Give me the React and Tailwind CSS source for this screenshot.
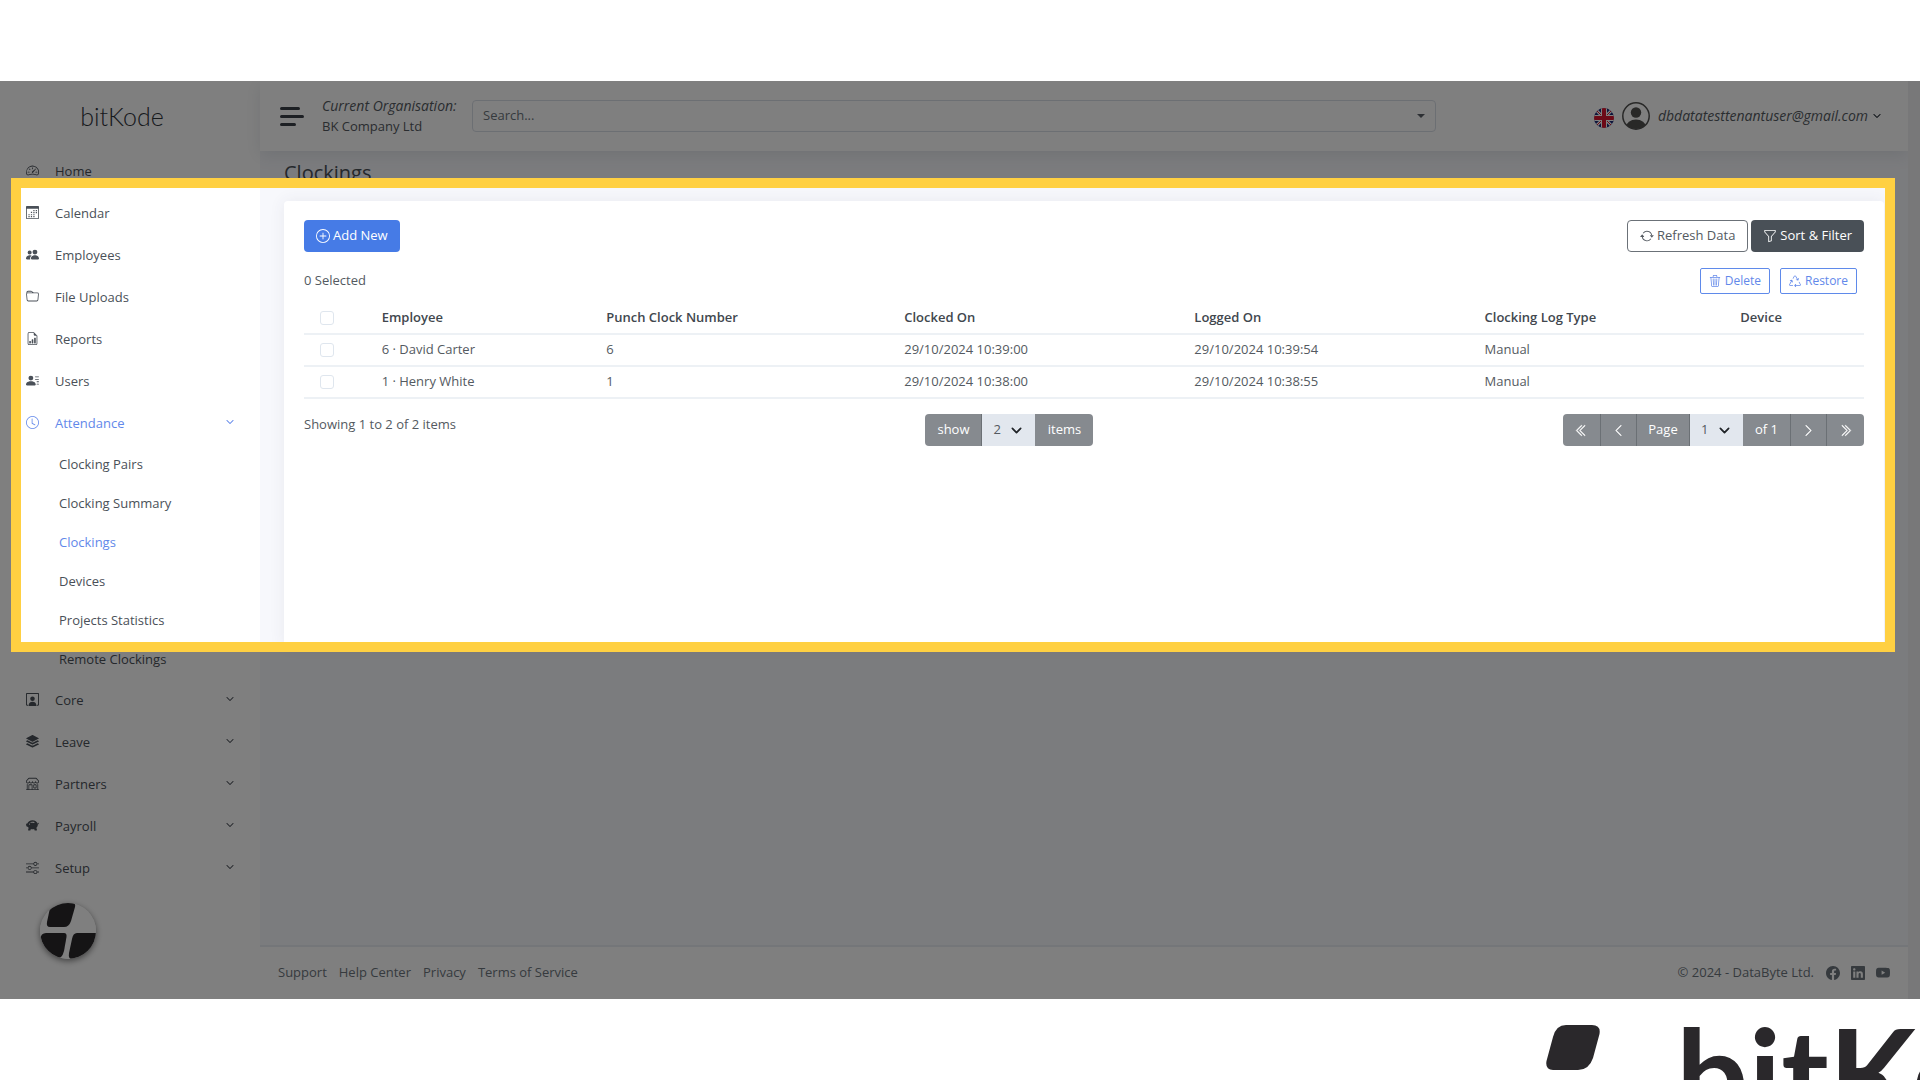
import { useState } from "react";
import {
  BsArrowRepeat,
  BsChevronDoubleLeft,
  BsChevronDoubleRight,
  BsChevronDown,
  BsChevronLeft,
  BsChevronRight,
  BsClock,
  BsFacebook,
  BsFileEarmarkBarGraph,
  BsFolder,
  BsFunnel,
  BsLinkedin,
  BsPeopleFill,
  BsPersonLinesFill,
  BsPiggyBankFill,
  BsPlusCircle,
  BsRecycle,
  BsShop,
  BsSliders,
  BsSpeedometer2,
  BsStack,
  BsTrash3,
  BsYoutube,
} from "react-icons/bs";

function CalendarIcon({ className }) {
  return (
    <svg viewBox="0 0 16 16" className={className} fill="currentColor">
      <path d="M1 0h14a1 1 0 0 1 1 1v14a1 1 0 0 1-1 1H1a1 1 0 0 1-1-1V1a1 1 0 0 1 1-1zm0 3.500V15h14V3.500z" fillRule="evenodd" />
      <path d="M9 5h1.500v1.500H9zM12 5h1.500v1.500H12zM6 7h1.500v1.500H6zM9 7.500h1.500V9H9zM12 7.500h1.500V9H12zM3 10h1.500v1.500H3zM6 10h1.500v1.500H6zM9 10h1.500v1.500H9zM3 12.300h1.500v1.500H3zM6 12.300h1.500v1.500H6zM9 12.300h1.500v1.500H9z" />
    </svg>
  );
}

function PersonFrameIcon({ className }) {
  return (
    <svg viewBox="0 0 16 16" className={className} fill="currentColor">
      <path d="M3 15H1.500a1 1 0 0 1-1-1V1.500a1 1 0 0 1 1-1h13a1 1 0 0 1 1 1V14a1 1 0 0 1-1 1H13" fill="none" stroke="currentColor" strokeWidth="1.300" />
      <circle cx="8" cy="7" r="2.800" />
      <path d="M3.500 16v-1.500C3.500 12 5.500 10.700 8 10.700s4.500 1.300 4.500 3.800V16z" />
    </svg>
  );
}

const menu = [
  { label: "Home", icon: BsSpeedometer2 },
  { label: "Calendar", icon: CalendarIcon },
  { label: "Employees", icon: BsPeopleFill },
  { label: "File Uploads", icon: BsFolder },
  { label: "Reports", icon: BsFileEarmarkBarGraph },
  { label: "Users", icon: BsPersonLinesFill },
  {
    label: "Attendance",
    icon: BsClock,
    active: true,
    children: [
      "Clocking Pairs",
      "Clocking Summary",
      "Clockings",
      "Devices",
      "Projects Statistics",
      "Remote Clockings",
    ],
  },
  { label: "Core", icon: PersonFrameIcon, children: [] },
  { label: "Leave", icon: BsStack, children: [] },
  { label: "Partners", icon: BsShop, children: [] },
  { label: "Payroll", icon: BsPiggyBankFill, children: [] },
  { label: "Setup", icon: BsSliders, children: [] },
];

const clockings = [
  { id: 1, employee: "6 · David Carter", punch: "6", clocked: "29/10/2024 10:39:00", logged: "29/10/2024 10:39:54", type: "Manual" },
  { id: 2, employee: "1 · Henry White", punch: "1", clocked: "29/10/2024 10:38:00", logged: "29/10/2024 10:38:55", type: "Manual" },
];

const checkbox = "block size-[14px] appearance-none rounded-[3px] border border-[#dfe6ee] bg-white checked:bg-[#467be6]";
const pagerCell = "flex h-8 items-center justify-center border-r border-[#6b7075] bg-[#868a8f] text-white last:border-r-0";

function Sidebar() {
  return (
    <aside className="flex w-[260px] shrink-0 flex-col bg-white">
      <div className="flex h-[70px] items-center justify-center pr-4">
        <a href="#" className="font-['Lato'] text-[25px] leading-none font-light text-[#2f343b]">bitKode</a>
      </div>
      <nav>
        <ul>
          {menu.map(({ label, icon: Icon, active, children }) => (
            <li key={label}>
              <a
                href="#"
                className={`flex h-[42px] items-center pr-[26px] pl-[26px] ${active ? "text-[#6288ea]" : "text-[#4a5058]"}`}
              >
                <Icon className="mb-1 size-[13px]" />
                <span className="ml-4 flex-1">{label}</span>
                {children && <BsChevronDown className="mb-1 size-2 stroke-1" />}
              </a>
              {children?.length > 0 && (
                <ul className="pb-px">
                  {children.map((child) => (
                    <li key={child}>
                      <a
                        href="#"
                        className={`flex h-[39px] items-center pl-[59px] ${child === "Clockings" ? "text-[#6288ea]" : "text-[#4a5058]"}`}
                      >
                        {child}
                      </a>
                    </li>
                  ))}
                </ul>
              )}
            </li>
          ))}
        </ul>
      </nav>
      <button type="button" aria-label="Open assistant" className="mt-[13px] ml-10 size-14 rounded-full shadow-[0_2px_6px_rgba(0,0,0,0.5)]">
        <svg viewBox="0 0 56 56" className="size-14">
          <defs>
            <clipPath id="disc">
              <circle cx="28" cy="28" r="28" />
            </clipPath>
          </defs>
          <circle cx="28" cy="28" r="28" fill="#fff" />
          <g clipPath="url(#disc)" fill="#2a282b">
            <path d="M13 0H32Q36 0 35 4L31 18Q29 24 24 24H10Q6 24 7 19L10 5Z" />
            <path d="M6 30H24Q27 30 26.500 34L24 48Q22 56 16 56H0V36Q1 30 6 30Z" />
            <path d="M37 30H56V56H32Q28 56 29 50L32 36Q33 30 37 30Z" />
          </g>
        </svg>
      </button>
    </aside>
  );
}

function Header() {
  return (
    <header className="flex h-[70px] items-center bg-white pr-[27px] pl-5 shadow-[0_4px_16px_rgba(60,70,90,0.12)]">
      <button type="button" aria-label="Toggle menu" className="flex flex-col gap-[5px]">
        <span className="h-[3px] w-5 rounded bg-[#3b4048]" />
        <span className="h-[3px] w-6 rounded bg-[#3b4048]" />
        <span className="h-[3px] w-4 rounded bg-[#3b4048]" />
      </button>
      <div className="ml-[18px] w-[150px] shrink-0 leading-[21px]">
        <p className="text-sm leading-[21px] italic">Current Organisation:</p>
        <p>BK Company Ltd</p>
      </div>
      <div className="flex h-8 w-full max-w-[964px] items-center rounded border border-[#d9dee6] px-[10px]">
        <input
          type="text"
          aria-label="Search"
          placeholder="Search..."
          className="w-full bg-transparent outline-none placeholder:text-[#6c757d]"
        />
        <span className="border-x-4 border-t-4 border-x-transparent border-t-[#5a6068]" />
      </div>
      <div className="ml-auto flex shrink-0 items-center">
        <svg viewBox="0 0 20 20" className="mt-1 size-5">
          <defs>
            <clipPath id="flag">
              <circle cx="10" cy="10" r="10" />
            </clipPath>
          </defs>
          <g clipPath="url(#flag)">
            <rect width="20" height="20" fill="#1b2a78" />
            <path d="M0 0L20 20M20 0L0 20" stroke="#fff" strokeWidth="3" />
            <path d="M0 0L20 20M20 0L0 20" stroke="#d8142e" strokeWidth="1" />
            <path d="M10 0V20M0 10H20" stroke="#fff" strokeWidth="6" />
            <path d="M10 0V20M0 10H20" stroke="#d8142e" strokeWidth="4" />
          </g>
        </svg>
        <svg viewBox="0 0 28 28" className="ml-2 size-7">
          <defs>
            <clipPath id="avatar">
              <circle cx="14" cy="14" r="13" />
            </clipPath>
          </defs>
          <circle cx="14" cy="14" r="13.200" fill="none" stroke="#50504f" strokeWidth="1.500" />
          <circle cx="14" cy="10.500" r="5.200" fill="#50504f" />
          <ellipse cx="14" cy="25" rx="10" ry="7.500" fill="#50504f" clipPath="url(#avatar)" />
        </svg>
        <button type="button" className="ml-2 flex items-center gap-[5px] text-sm italic">
          dbdatatesttenantuser@gmail.com
          <BsChevronDown className="size-2 stroke-2" />
        </button>
      </div>
    </header>
  );
}

function ClockingsTable() {
  return (
    <table className="w-full table-fixed text-left">
      <colgroup>
        <col className="w-[4.4%]" />
        <col className="w-[14.4%]" />
        <col className="w-[19.1%]" />
        <col className="w-[18.6%]" />
        <col className="w-[18.6%]" />
        <col className="w-[16.4%]" />
        <col />
      </colgroup>
      <thead>
        <tr className="h-8 border-b-2 border-[#edf1f5] text-[#41474e]">
          <th className="pl-4">
            <input type="checkbox" aria-label="Select all" className={checkbox} />
          </th>
          <th className="pl-[9px] font-semibold">Employee</th>
          <th className="pl-[9px] font-semibold">Punch Clock Number</th>
          <th className="pl-[9px] font-semibold">Clocked On</th>
          <th className="pl-[9px] font-semibold">Logged On</th>
          <th className="pl-[9px] font-semibold">Clocking Log Type</th>
          <th className="pl-[9px] font-semibold">Device</th>
        </tr>
      </thead>
      <tbody>
        {clockings.map((row) => (
          <tr key={row.id} className="h-8 border-b-2 border-[#edf1f5]">
            <td className="pl-4">
              <input type="checkbox" aria-label={`Select ${row.employee}`} className={checkbox} />
            </td>
            <td className="pl-[9px]">{row.employee}</td>
            <td className="pl-[9px]">{row.punch}</td>
            <td className="pl-[9px]">{row.clocked}</td>
            <td className="pl-[9px]">{row.logged}</td>
            <td className="pl-[9px]">{row.type}</td>
            <td />
          </tr>
        ))}
      </tbody>
    </table>
  );
}

function PagerSelect({ label, value, onChange, options }) {
  return (
    <div className="relative h-8 w-[53px]">
      <select
        aria-label={label}
        value={value}
        onChange={(e) => onChange(e.target.value)}
        className="size-full appearance-none bg-[#e2e7ee] pl-[11px]"
      >
        {options.map((o) => (
          <option key={o}>{o}</option>
        ))}
      </select>
      <BsChevronDown className="pointer-events-none absolute top-[11px] right-[13px] size-[11px] stroke-[1.500] text-[#212529]" />
    </div>
  );
}

function Pager() {
  const [size, setSize] = useState("2");
  const [page, setPage] = useState("1");

  return (
    <div className="mt-[15px] flex items-start justify-between">
      <p className="leading-[21px]">Showing 1 to 2 of 2 items</p>
      <div className="flex overflow-hidden rounded">
        <span className={`${pagerCell} w-[57px]`}>show</span>
        <PagerSelect label="Items per page" value={size} onChange={setSize} options={["2", "10", "25"]} />
        <span className={`${pagerCell} w-[58px]`}>items</span>
      </div>
      <div className="flex overflow-hidden rounded">
        <button type="button" aria-label="First page" className={`${pagerCell} w-[38px]`}>
          <BsChevronDoubleLeft className="stroke-[0.5]" />
        </button>
        <button type="button" aria-label="Previous page" className={`${pagerCell} w-9`}>
          <BsChevronLeft className="stroke-[0.5]" />
        </button>
        <span className={`${pagerCell} w-[53px]`}>Page</span>
        <PagerSelect label="Page" value={page} onChange={setPage} options={["1"]} />
        <span className={`${pagerCell} w-12`}>of 1</span>
        <button type="button" aria-label="Next page" className={`${pagerCell} w-9`}>
          <BsChevronRight className="stroke-[0.5]" />
        </button>
        <button type="button" aria-label="Last page" className={`${pagerCell} w-[37px]`}>
          <BsChevronDoubleRight className="stroke-[0.5]" />
        </button>
      </div>
    </div>
  );
}

function Footer() {
  return (
    <footer className="flex h-[54px] items-center justify-between border-t-2 border-[#e9edf3] bg-white px-[18px] text-[#6c757d]">
      <nav className="flex gap-3">
        <a href="#">Support</a>
        <a href="#">Help Center</a>
        <a href="#">Privacy</a>
        <a href="#">Terms of Service</a>
      </nav>
      <div className="flex items-center">
        <span>© 2024 - DataByte Ltd.</span>
        <a href="#" aria-label="Facebook" className="ml-3"><BsFacebook className="size-[14px]" /></a>
        <a href="#" aria-label="LinkedIn" className="ml-[11px]"><BsLinkedin className="size-[14px]" /></a>
        <a href="#" aria-label="YouTube" className="ml-[11px]"><BsYoutube className="size-[14px]" /></a>
      </div>
    </footer>
  );
}

export default function App() {
  return (
    <div className="h-screen overflow-hidden bg-white pt-[81px] font-['Open_Sans',sans-serif] text-[13px] text-[#545a61]">
      {/* App window */}
      <div className="relative flex h-[918px] overflow-hidden">
        <Sidebar />
        <div className="flex min-w-0 flex-1 flex-col bg-[#f7f8fc]">
          <Header />
          <main className="flex-1 px-6">
            <h1 className="h-[50px] pt-2 text-xl leading-7 text-[#495057]">Clockings</h1>
            <section className="h-[445px] rounded bg-white p-5 pt-[19px] shadow-[0_0_16px_rgba(60,70,90,0.08)]">
              <div className="flex justify-between">
                <button type="button" className="flex h-8 items-center gap-[3px] rounded bg-[#467be6] px-3 text-white">
                  <BsPlusCircle className="size-[14px]" />
                  Add New
                </button>
                <div className="flex gap-[3px]">
                  <button type="button" className="flex h-8 items-center gap-[3px] rounded border border-[#6b7178] px-3">
                    <BsArrowRepeat className="size-[14px]" />
                    Refresh Data
                  </button>
                  <button type="button" className="flex h-8 items-center gap-[3px] rounded bg-[#495057] px-3 text-white">
                    <BsFunnel className="size-[14px]" />
                    Sort & Filter
                  </button>
                </div>
              </div>
              <div className="mt-4 flex h-[26px] items-start justify-between">
                <span className="leading-6">0 Selected</span>
                <div className="mr-[7px] flex gap-[10px] text-xs text-[#6288ea]">
                  <button type="button" className="flex h-[26px] items-center gap-1 rounded-xs border border-[#5f8aea] px-2">
                    <BsTrash3 />
                    Delete
                  </button>
                  <button type="button" className="flex h-[26px] items-center gap-1 rounded-xs border border-[#5f8aea] px-2">
                    <BsRecycle />
                    Restore
                  </button>
                </div>
              </div>
              <div className="mt-2">
                <ClockingsTable />
              </div>
              <Pager />
            </section>
          </main>
          <Footer />
        </div>
        <div className="w-3 shrink-0 bg-[#f0f0f2]" />

        {/* Highlight frame, dims everything outside of it */}
        <div className="pointer-events-none absolute top-[97px] right-[25px] left-[11px] h-[474px] border-[10px] border-[#ffd042] shadow-[0_0_0_2000px_rgba(0,0,0,0.5)]" />
      </div>

      {/* Brand strip */}
      <div className="flex justify-end">
        <svg viewBox="0 0 54 45" className="mt-[26px] h-[45px] w-[54px]" fill="#2a282b">
          <path d="M20 0H46Q55 0 53.500 9L47 33Q43 45 32 45H7Q-1 45 0.500 36L7 12Q10 0 20 0Z" />
        </svg>
        <p className="ml-[76px] w-[244px] pt-1 font-['Lato'] text-[128px] leading-[140px] font-bold whitespace-nowrap text-[#2a282b]">bitKode</p>
      </div>
    </div>
  );
}
